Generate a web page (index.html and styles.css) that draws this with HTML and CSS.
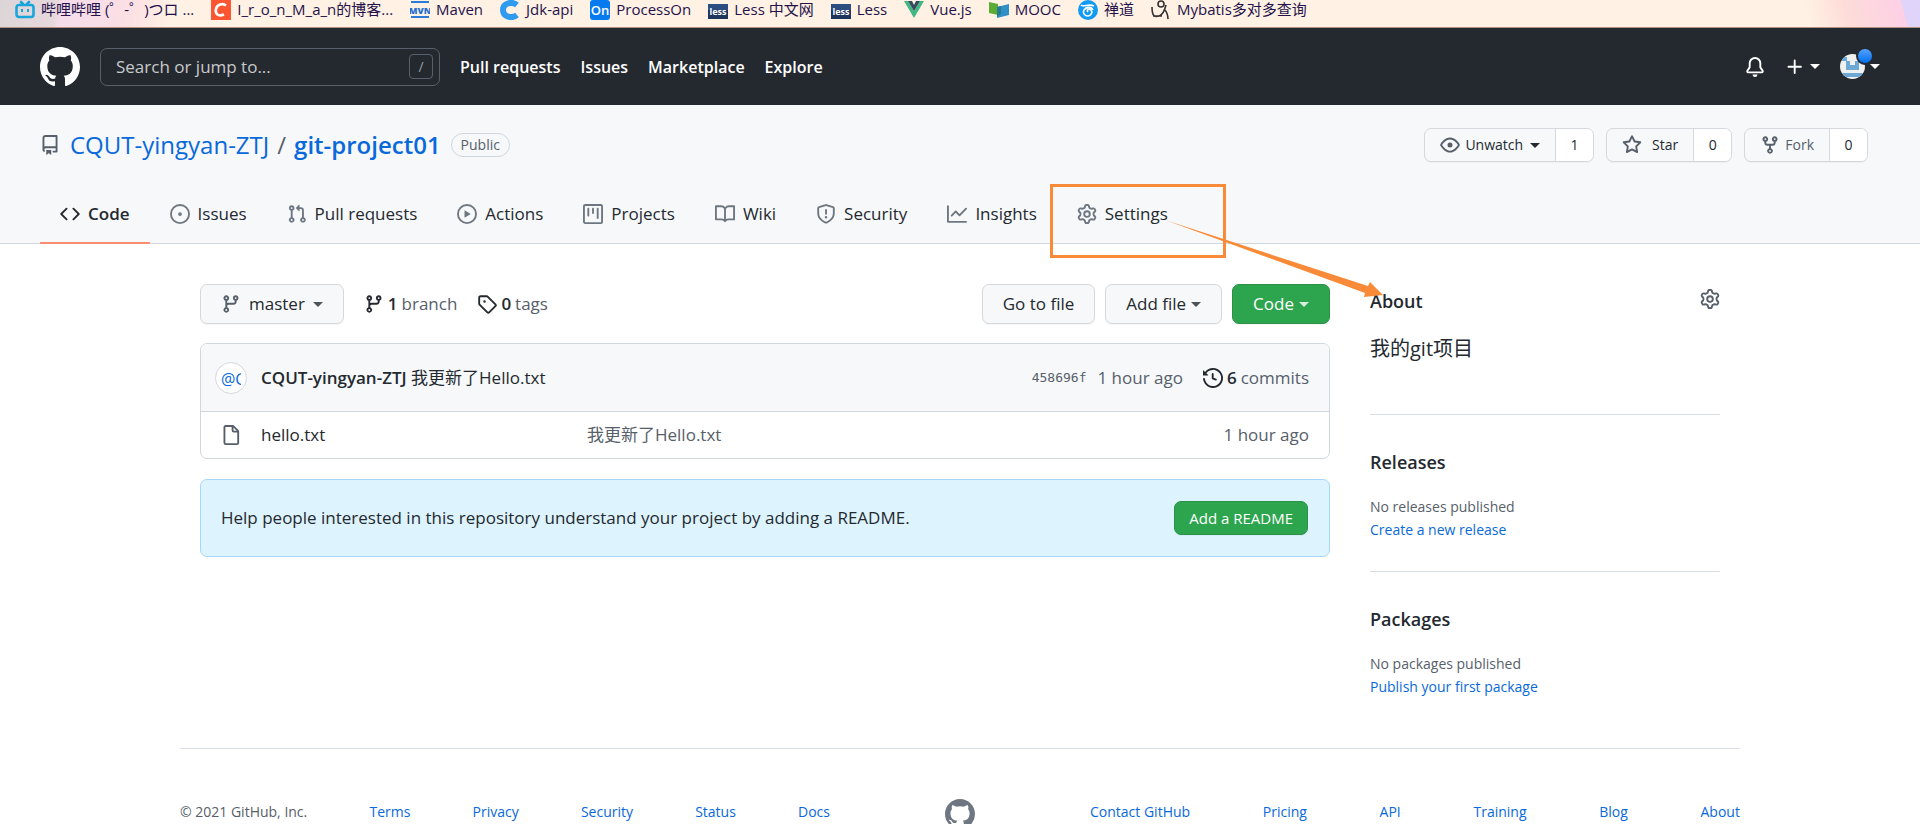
FILE: index.html
```
<!DOCTYPE html>
<html lang="en">
<head>
    <meta charset="UTF-8">
    <meta name="viewport" content="width=device-width, initial-scale=1.0">
    <title>CQUT-yingyan-ZTJ/git-project01</title>
    <link rel="stylesheet" href="styles.css">
</head>
<body>
    <!-- Icons used more than once -->
    <svg class="sprite" aria-hidden="true">
        <symbol id="mark" viewBox="0 0 16 16"><path fill-rule="evenodd" d="M8 0C3.58 0 0 3.58 0 8c0 3.54 2.29 6.53 5.47 7.59.4.07.55-.17.55-.38 0-.19-.01-.82-.01-1.49-2.01.37-2.53-.49-2.69-.94-.09-.23-.48-.94-.82-1.13-.28-.15-.68-.52-.01-.53.63-.01 1.08.58 1.23.82.72 1.21 1.87.87 2.33.66.07-.52.28-.87.51-1.07-1.78-.2-3.64-.89-3.64-3.95 0-.87.31-1.59.82-2.15-.08-.2-.36-1.02.08-2.12 0 0 .67-.21 2.2.82.64-.18 1.32-.27 2-.27.68 0 1.36.09 2 .27 1.53-1.04 2.2-.82 2.2-.82.44 1.1.16 1.92.08 2.12.51.56.82 1.27.82 2.15 0 3.07-1.87 3.75-3.65 3.95.29.25.54.73.54 1.48 0 1.07-.01 1.93-.01 2.2 0 .21.15.46.55.38A8.013 8.013 0 0016 8c0-4.42-3.58-8-8-8z"/></symbol>
        <symbol id="branch" viewBox="0 0 16 16"><path fill-rule="evenodd" d="M11.75 2.5a.75.75 0 100 1.5.75.75 0 000-1.5zm-2.25.75a2.25 2.25 0 113 2.122V6A2.5 2.5 0 0110 8.5H6a1 1 0 00-1 1v1.128a2.251 2.251 0 11-1.5 0V5.372a2.25 2.25 0 111.5 0v1.836A2.492 2.492 0 016 7h4a1 1 0 001-1v-.628A2.25 2.25 0 019.5 3.25zM4.25 12a.75.75 0 100 1.5.75.75 0 000-1.5zM3.5 3.25a.75.75 0 111.5 0 .75.75 0 01-1.5 0z"/></symbol>
        <symbol id="gear" viewBox="0 0 16 16"><path fill-rule="evenodd" d="M7.429 1.525a6.593 6.593 0 011.142 0c.036.003.108.036.137.146l.289 1.105c.147.56.55.967.997 1.189.174.086.341.183.501.29.417.278.97.423 1.53.27l1.102-.303c.11-.03.175.016.195.046.219.31.41.641.573.989.014.031.022.11-.059.19l-.815.806c-.411.406-.562.957-.53 1.456a4.588 4.588 0 010 .582c-.032.499.119 1.05.53 1.456l.815.806c.08.08.073.159.059.19a6.494 6.494 0 01-.573.99c-.02.029-.086.074-.195.045l-1.103-.303c-.559-.153-1.112-.008-1.529.27-.16.107-.327.204-.5.29-.449.222-.851.628-.998 1.189l-.289 1.105c-.029.11-.101.143-.137.146a6.613 6.613 0 01-1.142 0c-.036-.003-.108-.037-.137-.146l-.289-1.105c-.147-.56-.55-.967-.997-1.189a4.502 4.502 0 01-.501-.29c-.417-.278-.97-.423-1.53-.27l-1.102.303c-.11.03-.175-.016-.195-.046a6.492 6.492 0 01-.573-.989c-.014-.031-.022-.11.059-.19l.815-.806c.411-.406.562-.957.53-1.456a4.587 4.587 0 010-.582c.032-.499-.119-1.05-.53-1.456l-.815-.806c-.08-.08-.073-.159-.059-.19a6.44 6.44 0 01.573-.99c.02-.029.086-.075.195-.045l1.103.303c.559.153 1.112.008 1.529-.27.16-.107.327-.204.5-.29.449-.222.851-.628.998-1.189l.289-1.105c.029-.11.101-.143.137-.146zM8 0c-.236 0-.47.01-.701.03-.743.065-1.29.615-1.458 1.261l-.29 1.106c-.017.066-.078.158-.211.224a5.994 5.994 0 00-.668.386c-.123.082-.233.09-.3.071L3.27 2.776c-.644-.177-1.392.02-1.82.63a7.977 7.977 0 00-.704 1.217c-.315.675-.111 1.422.363 1.891l.815.806c.05.048.098.147.088.294a6.084 6.084 0 000 .772c.01.147-.038.246-.088.294l-.815.806c-.474.469-.678 1.216-.363 1.891.2.428.436.835.704 1.218.428.609 1.176.806 1.82.63l1.103-.303c.066-.019.176-.011.299.071.213.143.436.272.668.386.133.066.194.158.212.224l.289 1.106c.169.646.715 1.196 1.458 1.26a8.094 8.094 0 001.402 0c.743-.064 1.29-.614 1.458-1.26l.29-1.106c.017-.066.078-.158.211-.224a5.98 5.98 0 00.668-.386c.123-.082.233-.09.3-.071l1.102.302c.644.177 1.392-.02 1.82-.63.268-.382.505-.789.704-1.217.315-.675.111-1.422-.364-1.891l-.814-.806c-.05-.048-.098-.147-.088-.294a6.1 6.1 0 000-.772c-.01-.147.039-.246.088-.294l.814-.806c.475-.469.679-1.216.364-1.891a7.992 7.992 0 00-.704-1.218c-.428-.609-1.176-.806-1.82-.63l-1.103.303c-.066.019-.176.011-.299-.071a5.991 5.991 0 00-.668-.386c-.133-.066-.194-.158-.212-.224L10.16 1.29C9.99.645 9.444.095 8.701.031A8.094 8.094 0 008 0zm1.5 8a1.5 1.5 0 11-3 0 1.5 1.5 0 013 0zM11 8a3 3 0 11-6 0 3 3 0 016 0z"/></symbol>
        <symbol id="less" viewBox="0 0 20 20"><path fill="#1d365d" d="M0 4h20v15H0z"/><path fill="#2b4d80" d="M0 4h20v6H0z"/><text x="10" y="15" text-anchor="middle" font-size="9" font-weight="700" fill="#fff">less</text></symbol>
    </svg>

    <nav class="bookmarks" aria-label="Bookmarks">
        <a href="#"><svg viewBox="0 0 20 20"><g fill="none" stroke="#17a5dc" stroke-width="2.6" stroke-linecap="round"><rect x="1.5" y="5" width="17" height="12" rx="2.5"/><path d="M6 2l2 2M14 2l-2 2"/></g><path fill="none" stroke="#17a5dc" stroke-width="2" d="M7 9v3M13 9v3"/></svg>哔哩哔哩 (゜-゜)つロ ...</a>
        <a href="#"><svg viewBox="0 0 20 20"><path fill="#fc5531" d="M0 0h20v20H0z"/><path fill="none" stroke="#fff" stroke-width="2.6" d="M15 5.5C12 3 6 4 5 9s2 8 8 5.5"/></svg>I_r_o_n_M_a_n的博客...</a>
        <a href="#"><svg viewBox="0 0 20 20"><path fill="#2b7ad8" d="M1 1h18v2H1zM1 16h18v2H1z"/><text x="10" y="14" text-anchor="middle" font-size="9" font-weight="800" fill="#1f6fd0">MVN</text></svg>Maven</a>
        <a href="#"><svg viewBox="0 0 20 20"><path fill="none" stroke="#2f9bf0" stroke-width="6" d="M17 5C12 1 3 3 3 10s9 9 14 5"/></svg>Jdk-api</a>
        <a href="#"><svg viewBox="0 0 20 20"><rect width="20" height="20" rx="3" fill="#067bef"/><text x="10" y="15" text-anchor="middle" font-size="13" font-weight="600" fill="#fff">On</text></svg>ProcessOn</a>
        <a href="#"><svg><use href="#less"/></svg>Less 中文网</a>
        <a href="#"><svg><use href="#less"/></svg>Less</a>
        <a href="#"><svg viewBox="0 0 20 20"><path fill="#41b883" d="M0 1h4l6 10 6-10h4L10 18z"/><path fill="#35495e" d="M4 1h4l2 4 2-4h4l-6 10z"/></svg>Vue.js</a>
        <a href="#"><svg viewBox="0 0 20 20"><path fill="#5cab35" d="M0 2l9 2v11l-9-2z"/><path fill="#2f8fc6" d="M8 7l12-3v11L8 18z"/><path fill="#257a94" d="M8 7l4-1v8l-4 3z"/></svg>MOOC</a>
        <a href="#"><svg viewBox="0 0 20 20"><circle cx="10" cy="10" r="10" fill="#129bf2"/><path fill="none" stroke="#fff" stroke-width="1.6" d="M3 5c3 3 7-2 13 1M10 12c-2-2 1-4 3-2s0 6-3 6-6-3-4-6 7-4 9 0"/></svg>禅道</a>
        <a href="#"><svg viewBox="0 0 20 20"><g fill="none" stroke="#333" stroke-width="1.6"><circle cx="10" cy="4" r="3"/><path d="M1 7c0 10 3 10 7 9s6-7 7-11M2 16h9M13 9c2 2 4 6 4 10"/></g></svg>Mybatis多对多查询</a>
    </nav>

    <header class="header">
        <a href="#" class="header-logo" aria-label="Homepage"><svg width="40" height="40"><use href="#mark"/></svg></a>
        <label class="search">
            <input type="text" aria-label="Search or jump to" placeholder="Search or jump to...">
            <kbd>/</kbd>
        </label>
        <nav class="header-nav">
            <a href="#">Pull requests</a>
            <a href="#">Issues</a>
            <a href="#">Marketplace</a>
            <a href="#">Explore</a>
        </nav>
        <div class="header-right">
            <a href="#" aria-label="Notifications"><svg width="20" height="20" viewBox="0 0 16 16"><path d="M8 16a2 2 0 001.985-1.75c.017-.137-.097-.25-.235-.25h-3.5c-.138 0-.252.113-.235.25A2 2 0 008 16z"/><path fill-rule="evenodd" d="M8 1.5A3.5 3.5 0 004.5 5v2.947c0 .346-.102.683-.294.97l-1.703 2.556a.018.018 0 00-.003.01l.001.006c0 .002.002.004.004.006a.017.017 0 00.006.004l.007.001h10.964l.007-.001a.016.016 0 00.006-.004.016.016 0 00.004-.006l.001-.007a.017.017 0 00-.003-.01l-1.703-2.554a1.75 1.75 0 01-.294-.97V5A3.5 3.5 0 008 1.5zM3 5a5 5 0 0110 0v2.947c0 .05.015.098.042.139l1.703 2.555A1.518 1.518 0 0113.482 13H2.518a1.518 1.518 0 01-1.263-2.36l1.703-2.554A.25.25 0 003 7.947V5z"/></svg></a>
            <button type="button" aria-label="Create new"><svg width="20" height="20" viewBox="0 0 16 16"><path fill-rule="evenodd" d="M7.75 2a.75.75 0 01.75.75V7h4.25a.75.75 0 110 1.5H8.5v4.25a.75.75 0 11-1.5 0V8.5H2.75a.75.75 0 010-1.5H7V2.75A.75.75 0 017.75 2z"/></svg><span class="caret"></span></button>
            <button type="button" class="user" aria-label="View profile"><svg class="user-avatar" width="25" height="25" viewBox="0 0 25 25"><path fill="#f0f0f0" d="M0 0h25v25H0z"/><path fill="#6ea8d5" d="M2 3h5v4H2zM6 7h4v4h5V7h4v9H6zM0 19h25v4H0z"/></svg><span class="user-dot"></span><span class="caret"></span></button>
        </div>
    </header>

    <div class="repo-head">
        <div class="repo-title-row">
            <h1 class="repo-title">
                <svg width="20" height="20" viewBox="0 0 16 16"><path fill-rule="evenodd" d="M2 2.5A2.5 2.5 0 014.5 0h8.75a.75.75 0 01.75.75v12.5a.75.75 0 01-.75.75h-2.5a.75.75 0 110-1.5h1.75v-2h-8a1 1 0 00-.714 1.7.75.75 0 01-1.072 1.05A2.495 2.495 0 012 11.5v-9zm10.5-1V9h-8c-.356 0-.694.074-1 .208V2.5a1 1 0 011-1h8zM5 12.25v3.25a.25.25 0 00.4.2l1.45-1.087a.25.25 0 01.3 0L8.6 15.7a.25.25 0 00.4-.2v-3.25a.25.25 0 00-.25-.25h-3.5a.25.25 0 00-.25.25z"/></svg>
                <a href="#">CQUT-yingyan-ZTJ</a>
                <span class="slash">/</span>
                <a href="#" class="repo-name">git-project01</a>
                <span class="label">Public</span>
            </h1>
            <div class="repo-actions">
                <div class="split">
                    <button type="button"><svg width="20" height="20" viewBox="0 0 16 16"><path fill-rule="evenodd" d="M1.679 7.932c.412-.621 1.242-1.75 2.366-2.717C5.175 4.242 6.527 3.5 8 3.5c1.473 0 2.824.742 3.955 1.715 1.124.967 1.954 2.096 2.366 2.717a.119.119 0 010 .136c-.412.621-1.242 1.75-2.366 2.717C10.825 11.758 9.473 12.5 8 12.5c-1.473 0-2.824-.742-3.955-1.715C2.92 9.818 2.09 8.69 1.679 8.068a.119.119 0 010-.136zM8 2c-1.981 0-3.67.992-4.933 2.078C1.797 5.169.88 6.423.43 7.1a1.619 1.619 0 000 1.798c.45.678 1.367 1.932 2.637 3.024C4.329 13.008 6.019 14 8 14c1.981 0 3.67-.992 4.933-2.078 1.27-1.091 2.187-2.345 2.637-3.023a1.619 1.619 0 000-1.798c-.45-.678-1.367-1.932-2.637-3.023C11.671 2.992 9.981 2 8 2zm0 8a2 2 0 100-4 2 2 0 000 4z"/></svg>Unwatch <span class="caret"></span></button>
                    <a href="#">1</a>
                </div>
                <div class="split split-star">
                    <button type="button"><svg width="20" height="20" viewBox="0 0 16 16"><path fill-rule="evenodd" d="M8 .25a.75.75 0 01.673.418l1.882 3.815 4.21.612a.75.75 0 01.416 1.279l-3.046 2.97.719 4.192a.75.75 0 01-1.088.791L8 12.347l-3.766 1.98a.75.75 0 01-1.088-.79l.72-4.194L.818 6.374a.75.75 0 01.416-1.28l4.21-.611L7.327.668A.75.75 0 018 .25zm0 2.445L6.615 5.5a.75.75 0 01-.564.41l-3.097.45 2.24 2.184a.75.75 0 01.216.664l-.528 3.084 2.769-1.456a.75.75 0 01.698 0l2.77 1.456-.53-3.084a.75.75 0 01.216-.664l2.24-2.183-3.096-.45a.75.75 0 01-.564-.41L8 2.694v.001z"/></svg>Star</button>
                    <a href="#">0</a>
                </div>
                <div class="split split-fork">
                    <button type="button"><svg width="20" height="20" viewBox="0 0 16 16"><path fill-rule="evenodd" d="M5 3.25a.75.75 0 11-1.5 0 .75.75 0 011.5 0zm0 2.122a2.25 2.25 0 10-1.5 0v.878A2.25 2.25 0 005.75 8.5h1.5v2.128a2.251 2.251 0 101.5 0V8.5h1.5a2.25 2.25 0 002.25-2.25v-.878a2.25 2.25 0 10-1.5 0v.878a.75.75 0 01-.75.75h-4.5A.75.75 0 015 6.25v-.878zm3.75 7.378a.75.75 0 11-1.5 0 .75.75 0 011.5 0zm3-8.75a.75.75 0 100-1.5.75.75 0 000 1.5z"/></svg>Fork</button>
                    <a href="#">0</a>
                </div>
            </div>
        </div>

        <nav class="tabs">
            <a href="#" class="selected"><svg viewBox="0 0 16 16"><path fill-rule="evenodd" d="M4.72 3.22a.75.75 0 011.06 1.06L2.06 8l3.72 3.72a.75.75 0 11-1.06 1.06L.47 8.53a.75.75 0 010-1.06l4.25-4.25zm6.56 0a.75.75 0 10-1.06 1.06L13.94 8l-3.72 3.72a.75.75 0 101.06 1.06l4.25-4.25a.75.75 0 000-1.06l-4.25-4.25z"/></svg>Code</a>
            <a href="#"><svg viewBox="0 0 16 16"><path d="M8 9.5a1.5 1.5 0 100-3 1.5 1.5 0 000 3z"/><path fill-rule="evenodd" d="M8 0a8 8 0 100 16A8 8 0 008 0zM1.5 8a6.5 6.5 0 1113 0 6.5 6.5 0 01-13 0z"/></svg>Issues</a>
            <a href="#"><svg viewBox="0 0 16 16"><path fill-rule="evenodd" d="M7.177 3.073L9.573.677A.25.25 0 0110 .854v4.792a.25.25 0 01-.427.177L7.177 3.427a.25.25 0 010-.354zM3.75 2.5a.75.75 0 100 1.5.75.75 0 000-1.5zm-2.25.75a2.25 2.25 0 113 2.122v5.256a2.251 2.251 0 11-1.5 0V5.372A2.25 2.25 0 011.5 3.25zM11 2.5h-1V4h1a1 1 0 011 1v5.628a2.251 2.251 0 101.5 0V5A2.5 2.5 0 0011 2.5zm1 10.25a.75.75 0 111.5 0 .75.75 0 01-1.5 0zM3.75 12a.75.75 0 100 1.5.75.75 0 000-1.5z"/></svg>Pull requests</a>
            <a href="#"><svg viewBox="0 0 16 16"><path fill-rule="evenodd" d="M1.5 8a6.5 6.5 0 1113 0 6.5 6.5 0 01-13 0zM8 0a8 8 0 100 16A8 8 0 008 0zM6.379 5.227A.25.25 0 006 5.442v5.117a.25.25 0 00.379.214l4.264-2.559a.25.25 0 000-.428L6.379 5.227z"/></svg>Actions</a>
            <a href="#"><svg viewBox="0 0 16 16"><path fill-rule="evenodd" d="M1.75 0A1.75 1.75 0 000 1.75v12.5C0 15.216.784 16 1.75 16h12.5A1.75 1.75 0 0016 14.25V1.75A1.75 1.75 0 0014.25 0H1.75zM1.5 1.75a.25.25 0 01.25-.25h12.5a.25.25 0 01.25.25v12.5a.25.25 0 01-.25.25H1.75a.25.25 0 01-.25-.25V1.75zM11.75 3a.75.75 0 00-.75.75v7.5a.75.75 0 001.5 0v-7.5a.75.75 0 00-.75-.75zm-8.25.75a.75.75 0 011.5 0v5.5a.75.75 0 01-1.5 0v-5.5zM8 3a.75.75 0 00-.75.75v3.5a.75.75 0 001.5 0v-3.5A.75.75 0 008 3z"/></svg>Projects</a>
            <a href="#"><svg viewBox="0 0 16 16"><path fill-rule="evenodd" d="M0 1.75A.75.75 0 01.75 1h4.253c1.227 0 2.317.59 3 1.501A3.744 3.744 0 0111.006 1h4.245a.75.75 0 01.75.75v10.5a.75.75 0 01-.75.75h-4.507a2.25 2.25 0 00-1.591.659l-.622.621a.75.75 0 01-1.06 0l-.622-.621A2.25 2.25 0 005.258 13H.75a.75.75 0 01-.75-.75V1.75zm8.755 3a2.25 2.25 0 012.25-2.25H14.5v9h-3.757c-.71 0-1.4.201-1.992.572l.004-7.322zm-1.504 7.324l.004-5.073-.002-2.253A2.25 2.25 0 005.003 2.5H1.5v9h3.757a3.75 3.75 0 011.994.574z"/></svg>Wiki</a>
            <a href="#"><svg viewBox="0 0 16 16"><path fill-rule="evenodd" d="M7.467.133a1.75 1.75 0 011.066 0l5.25 1.68A1.75 1.75 0 0115 3.48V7c0 1.566-.32 3.182-1.303 4.682-.983 1.498-2.585 2.813-5.032 3.855a1.7 1.7 0 01-1.33 0c-2.447-1.042-4.049-2.357-5.032-3.855C1.32 10.182 1 8.566 1 7V3.48a1.75 1.75 0 011.217-1.667l5.25-1.68zm.61 1.429a.25.25 0 00-.153 0l-5.25 1.68a.25.25 0 00-.174.238V7c0 1.358.275 2.666 1.057 3.86.784 1.194 2.121 2.34 4.366 3.297a.2.2 0 00.154 0c2.245-.956 3.582-2.104 4.366-3.298C13.225 9.666 13.5 8.36 13.5 7V3.48a.25.25 0 00-.174-.237l-5.25-1.68zM9 10.5a1 1 0 11-2 0 1 1 0 012 0zm-.25-5.75a.75.75 0 10-1.5 0v3a.75.75 0 001.5 0v-3z"/></svg>Security</a>
            <a href="#"><svg viewBox="0 0 16 16"><path fill-rule="evenodd" d="M1.5 1.75a.75.75 0 00-1.5 0v12.5c0 .414.336.75.75.75h14.5a.75.75 0 000-1.5H1.5V1.75zm14.28 2.53a.75.75 0 00-1.06-1.06L10 7.94 7.53 5.47a.75.75 0 00-1.06 0L3.22 8.72a.75.75 0 001.06 1.06L7 7.06l2.47 2.47a.75.75 0 001.06 0l5.25-5.25z"/></svg>Insights</a>
            <a href="#" class="marked"><svg><use href="#gear"/></svg>Settings<span class="mark-box"></span><svg class="mark-arrow" viewBox="0 0 220 84"><path d="M0 0L203 66 205 62 218 75 199 77 200 73z"/></svg></a>
        </nav>
    </div>

    <div class="layout">
        <main>
            <div class="toolbar">
                <button type="button" class="btn btn-branch"><svg width="20" height="20"><use href="#branch"/></svg>master<span class="caret"></span></button>
                <a href="#" class="stat"><svg width="20" height="20"><use href="#branch"/></svg><strong>1</strong> branch</a>
                <a href="#" class="stat"><svg width="20" height="20" viewBox="0 0 16 16"><path fill-rule="evenodd" d="M2.5 7.775V2.75a.25.25 0 01.25-.25h5.025a.25.25 0 01.177.073l6.25 6.25a.25.25 0 010 .354l-5.025 5.025a.25.25 0 01-.354 0l-6.25-6.25a.25.25 0 01-.073-.177zm-1.5 0V2.75C1 1.784 1.784 1 2.75 1h5.025c.464 0 .91.184 1.238.513l6.25 6.25a1.75 1.75 0 010 2.474l-5.026 5.026a1.75 1.75 0 01-2.474 0l-6.25-6.25A1.75 1.75 0 011 7.775zM6 5a1 1 0 100 2 1 1 0 000-2z"/></svg><strong>0</strong> tags</a>
                <div class="toolbar-right">
                    <a href="#" class="btn">Go to file</a>
                    <button type="button" class="btn">Add file<span class="caret"></span></button>
                    <button type="button" class="btn btn-primary">Code<span class="caret"></span></button>
                </div>
            </div>

            <div class="files">
                <div class="commit">
                    <a href="#" class="commit-avatar"><span>@CQUT</span></a>
                    <div class="commit-message"><a href="#" class="author">CQUT-yingyan-ZTJ</a> <a href="#">我更新了Hello.txt</a></div>
                    <a href="#" class="hash">458696f</a>
                    <a href="#" class="muted">1 hour ago</a>
                    <a href="#" class="stat commits"><svg width="20" height="20" viewBox="0 0 16 16"><path fill-rule="evenodd" d="M1.643 3.143L.427 1.927A.25.25 0 000 2.104V5.75c0 .138.112.25.25.25h3.646a.25.25 0 00.177-.427L2.715 4.215a6.5 6.5 0 11-1.18 4.458.75.75 0 10-1.493.154 8.001 8.001 0 101.6-5.684zM7.75 4a.75.75 0 01.75.75v2.992l2.028.812a.75.75 0 01-.557 1.392l-2.5-1A.75.75 0 017 8.25v-3.5A.75.75 0 017.75 4z"/></svg><strong>6</strong> commits</a>
                </div>
                <table>
                    <tr>
                        <td class="file-icon"><svg width="20" height="20" viewBox="0 0 16 16"><path fill-rule="evenodd" d="M3.75 1.5a.25.25 0 00-.25.25v12.5c0 .138.112.25.25.25h9a.25.25 0 00.25-.25V6h-2.75A1.75 1.75 0 018.5 4.25V1.5H3.75zm6.25.5v2.25c0 .138.112.25.25.25h2.25L10 2zM2 1.75C2 .784 2.784 0 3.75 0h5.586c.464 0 .909.184 1.237.513l3.414 3.414c.329.328.513.773.513 1.237v9.086A1.75 1.75 0 0112.75 16h-9A1.75 1.75 0 012 14.25V1.75z"/></svg></td>
                        <td class="file-name"><a href="#">hello.txt</a></td>
                        <td><a href="#" class="muted">我更新了Hello.txt</a></td>
                        <td class="file-age">1 hour ago</td>
                    </tr>
                </table>
            </div>

            <div class="readme-prompt">
                <p>Help people interested in this repository understand your project by adding a README.</p>
                <a href="#" class="btn btn-primary btn-sm">Add a README</a>
            </div>
        </main>

        <aside>
            <section>
                <div class="about-head">
                    <h2>About</h2>
                    <button type="button" aria-label="Edit repository details"><svg width="20" height="20"><use href="#gear"/></svg></button>
                </div>
                <p class="description">我的git项目</p>
            </section>
            <section>
                <h2>Releases</h2>
                <p>No releases published</p>
                <a href="#">Create a new release</a>
            </section>
            <section>
                <h2>Packages</h2>
                <p>No packages published</p>
                <a href="#">Publish your first package</a>
            </section>
        </aside>
    </div>

    <footer>
        <ul>
            <li>© 2021 GitHub, Inc.</li>
            <li><a href="#">Terms</a></li>
            <li><a href="#">Privacy</a></li>
            <li><a href="#">Security</a></li>
            <li><a href="#">Status</a></li>
            <li><a href="#">Docs</a></li>
        </ul>
        <a href="#" class="footer-logo" aria-label="Homepage"><svg width="30" height="30"><use href="#mark"/></svg></a>
        <ul>
            <li><a href="#">Contact GitHub</a></li>
            <li><a href="#">Pricing</a></li>
            <li><a href="#">API</a></li>
            <li><a href="#">Training</a></li>
            <li><a href="#">Blog</a></li>
            <li><a href="#">About</a></li>
        </ul>
    </footer>
</body>
</html>
```

FILE: styles.css
```
* {
    margin: 0;
    padding: 0;
    box-sizing: border-box;
}

html {
    height: 100%;
    overflow: hidden;
}

body {
    height: 100%;
    overflow: auto;
    scrollbar-width: none;
    font-family: "Open Sans", "Noto Sans CJK SC", sans-serif;
    font-size: 17px;
    line-height: 26px;
    color: #24292f;
    background: #fff;
}

a {
    color: #0969da;
    text-decoration: none;
}

button {
    font: inherit;
    color: inherit;
    background: none;
    border: none;
    cursor: pointer;
}

svg {
    fill: currentColor;
    flex-shrink: 0;
}

strong {
    font-weight: 600;
}

.sprite {
    display: none;
}

.caret {
    display: inline-block;
    border: 5px solid transparent;
    border-top-color: currentColor;
    border-bottom: 0;
}

.muted {
    color: #57606a;
}

/* Bookmarks bar */
.bookmarks {
    display: flex;
    gap: 17px;
    height: 28px;
    padding: 0 15px;
    border-bottom: 1px solid #b08f80;
    background: linear-gradient(75deg, transparent 94%, #fddcd8 96%, #fdd0e6 99%, #e0d4fb 99%), linear-gradient(100deg, #dcd5d8 0, #e6d8dc 56px, #f4dcea 62px, #fbe0e4 130px, #fff1e4 170px);
    overflow: hidden;
}

.bookmarks a {
    display: flex;
    gap: 6px;
    font-size: 15px;
    line-height: 18px;
    color: #24114a;
    white-space: nowrap;
}

.bookmarks svg {
    width: 20px;
    height: 20px;
}

/* Header */
.header {
    display: flex;
    align-items: center;
    gap: 20px;
    height: 77px;
    padding: 0 40px;
    color: #fff;
    background: #24292f;
}

.header a {
    color: #fff;
}

.header svg {
    display: block;
}

.search {
    display: flex;
    align-items: center;
    width: 340px;
    height: 38px;
    padding: 0 6px 0 15px;
    border: 1px solid #57606a;
    border-radius: 7px;
}

.search input {
    flex: 1;
    min-width: 0;
    font: inherit;
    color: #fff;
    background: none;
    border: none;
    outline: none;
}

.search input::placeholder {
    color: #c8c9cb;
}

.search kbd {
    width: 24px;
    height: 25px;
    border: 1px solid #57606a;
    border-radius: 4px;
    font-family: inherit;
    font-size: 14px;
    line-height: 23px;
    text-align: center;
    color: #9a9da1;
}

.header-nav {
    display: flex;
    gap: 20px;
    font-size: 16px;
    font-weight: 600;
}

.header-right {
    display: flex;
    align-items: center;
    gap: 20px;
    margin-left: auto;
}

.header-right button {
    display: flex;
    align-items: center;
    gap: 5px;
}

.user {
    position: relative;
}

.user-avatar {
    border-radius: 50%;
}

.user-dot {
    position: absolute;
    top: -7px;
    left: 16px;
    width: 18px;
    height: 18px;
    border: 2px solid #24292f;
    border-radius: 50%;
    background: linear-gradient(#54a3ff, #006eed);
}

/* Repository head */
.repo-head {
    background: #f6f8fa;
    border-bottom: 1px solid #d0d7de;
}

.repo-title-row {
    display: flex;
    justify-content: space-between;
    align-items: center;
    padding: 20px 52px 0 40px;
}

.repo-title {
    display: flex;
    align-items: center;
    font-size: 24px;
    font-weight: 400;
    line-height: 40px;
}

.repo-title svg {
    margin-right: 10px;
    color: #57606a;
}

.slash {
    margin: 0 8px;
    color: #57606a;
}

.repo-name {
    font-weight: 600;
}

.label {
    margin-left: 10px;
    padding: 0 9px;
    border: 1px solid #d0d7de;
    border-radius: 20px;
    font-size: 14px;
    line-height: 22px;
    color: #57606a;
}

.repo-actions {
    display: flex;
    gap: 12px;
    font-size: 14px;
    line-height: 32px;
}

.split {
    display: flex;
    border: 1px solid #d5d8dc;
    border-radius: 7px;
    box-shadow: 0 1px 0 rgba(27, 31, 36, 0.04);
    overflow: hidden;
}

.split button {
    display: flex;
    align-items: center;
    gap: 5px;
    padding: 0 15px;
}

.split button svg {
    color: #57606a;
}

.split .caret {
    margin-left: 2px;
}

.split a {
    min-width: 38px;
    padding: 0 14px;
    border-left: 1px solid #d5d8dc;
    color: #24292f;
    background: #fff;
    text-align: center;
}

.split-star button {
    gap: 10px;
}

.split-fork button {
    color: #57606a;
}

.tabs {
    display: flex;
    height: 78px;
    padding: 20px 40px 0;
}

.tabs a {
    display: flex;
    align-items: center;
    gap: 8px;
    margin-bottom: -1px;
    padding: 0 20px;
    border-bottom: 2px solid transparent;
    color: #24292f;
}

.tabs svg {
    width: 20px;
    height: 20px;
    color: #6e7781;
}

.tabs .selected {
    border-bottom-color: #fd8c73;
    font-weight: 600;
}

.tabs .selected svg {
    color: #24292f;
}

/* Drawn callout over the Settings tab */
.marked {
    position: relative;
}

.mark-box {
    position: absolute;
    top: -1px;
    left: -7px;
    width: 176px;
    height: 74px;
    border: 3px solid #f98a38;
}

.tabs .mark-arrow {
    position: absolute;
    top: 35px;
    left: 108px;
    z-index: 1;
    width: 220px;
    height: 84px;
    color: #f98a38;
}

/* Content */
.layout {
    display: grid;
    grid-template-columns: 1fr 350px;
    gap: 40px;
    max-width: 1600px;
    margin: 0 auto;
    padding: 40px 40px 0;
}

.btn {
    display: flex;
    align-items: center;
    gap: 5px;
    padding: 6px 20px;
    border: 1px solid #d5d8dc;
    border-radius: 7px;
    color: #24292f;
    background: #f6f8fa;
    box-shadow: 0 1px 0 rgba(27, 31, 36, 0.04);
}

.btn-primary {
    border-color: #2a9147;
    color: #fff;
    background: #2da44e;
}

.btn-branch {
    gap: 8px;
}

.btn .caret {
    opacity: 0.8;
}

.btn-branch svg {
    color: #57606a;
}

.btn-sm {
    padding: 3px 14px;
    font-size: 15px;
}

.toolbar {
    display: flex;
    align-items: center;
    gap: 20px;
}

.toolbar-right {
    display: flex;
    gap: 10px;
    margin-left: auto;
}

.stat {
    display: flex;
    align-items: center;
    gap: 4px;
    color: #57606a;
}

.stat svg,
.stat strong {
    color: #24292f;
}

.files {
    margin-top: 19px;
    border: 1px solid #d0d7de;
    border-radius: 7px;
    overflow: hidden;
}

.commit {
    display: flex;
    align-items: center;
    height: 68px;
    padding: 0 20px 0 14px;
    border-bottom: 1px solid #d0d7de;
    background: #f6f8fa;
}

.commit-avatar {
    width: 32px;
    height: 32px;
    padding: 3px 5px;
    border: 1px solid #d5d8dc;
    border-radius: 50%;
    font-size: 16px;
    background: #fff;
}

.commit-avatar span {
    display: block;
    overflow: hidden;
}

.commit-message {
    flex: 1;
    margin-left: 14px;
}

.commit-message a {
    color: #24292f;
}

.commit-message .author {
    font-weight: 600;
}

.hash {
    margin-right: 11px;
    font-family: "DejaVu Sans Mono", monospace;
    font-size: 13px;
    color: #57606a;
}

.commits {
    margin-left: 20px;
}

.files table {
    width: 100%;
    border-collapse: collapse;
    table-layout: fixed;
}

.files td {
    height: 46px;
}

.file-icon {
    width: 60px;
    padding-left: 20px;
    color: #57606a;
}

.file-icon svg {
    display: block;
}

.file-name {
    width: 326px;
}

.file-name a {
    color: #24292f;
}

.file-age {
    padding-right: 20px;
    text-align: right;
    color: #57606a;
}

.readme-prompt {
    display: flex;
    align-items: center;
    justify-content: space-between;
    margin-top: 20px;
    padding: 21px 21px 21px 20px;
    border: 1px solid #a6d7fb;
    border-radius: 7px;
    background: #ddf4ff;
}

/* Sidebar */
aside section {
    padding: 30px 0;
    border-bottom: 1px solid #d8dee4;
    font-size: 14px;
    line-height: 23px;
}

aside section:first-child {
    padding-top: 0;
    padding-bottom: 50px;
}

aside section:last-child {
    border-bottom: none;
}

aside h2 {
    margin-bottom: 15px;
    font-size: 18px;
    font-weight: 600;
    line-height: 35px;
}

aside p {
    color: #57606a;
}

.about-head {
    display: flex;
    justify-content: space-between;
    align-items: flex-start;
}

.about-head button {
    padding-top: 5px;
    color: #57606a;
}

aside .description {
    font-size: 20px;
    line-height: 30px;
    color: #24292f;
}

/* Footer */
footer {
    display: flex;
    justify-content: space-between;
    max-width: 1560px;
    margin: 20px auto 0;
    padding: 50px 0 40px;
    border-top: 1px solid #d8dee4;
    font-size: 14px;
    color: #57606a;
}

footer ul {
    display: flex;
    justify-content: space-between;
    width: 650px;
    list-style: none;
}

.footer-logo {
    color: #6e7781;
}
```
